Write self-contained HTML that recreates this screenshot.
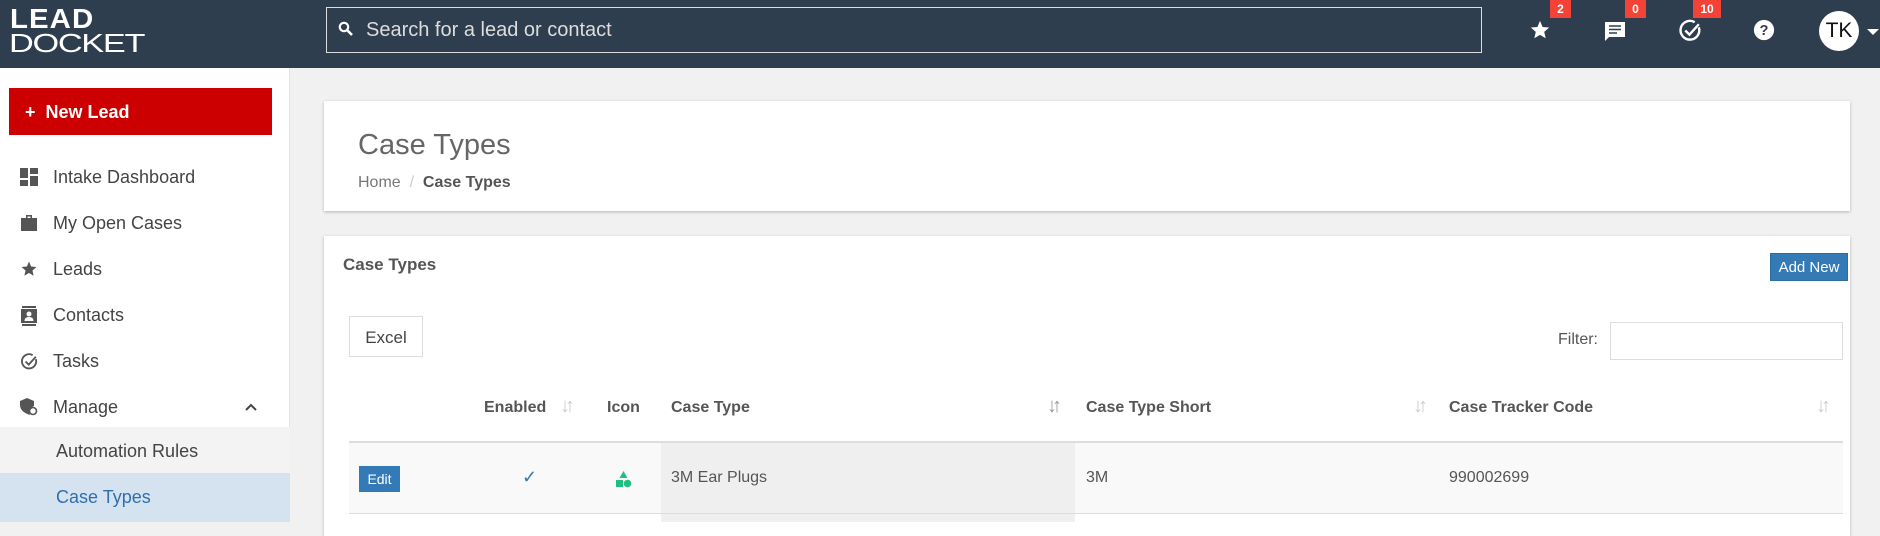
<!DOCTYPE html>
<html><head><meta charset="utf-8"><style>
*{box-sizing:border-box;margin:0;padding:0}
body{width:1880px;height:522px;overflow:hidden;background:#f1f1f1;font-family:"Liberation Sans",sans-serif;position:relative;color:#555}
.abs{position:absolute}
.hdr{left:0;top:0;width:1880px;height:68px;background:#2f3e4f}
.side{left:0;top:68px;width:290px;height:454px;background:#fff;border-right:1px solid #e2e2e2}
.nav{position:absolute;left:0;width:289px;height:46px;font-size:18px;color:#444;line-height:48px}
.nav .t{position:absolute;left:53px}
.nav svg{position:absolute;left:20px;top:15px}
.badge{background:#f44336;color:#fff;font-size:12px;font-weight:bold;height:18px;line-height:18px;text-align:center;top:0}
.card{background:#fff;box-shadow:0 1px 3px rgba(0,0,0,.25)}
.hd{position:absolute;top:399px;font-size:16px;font-weight:bold;color:#555}
.sort{position:absolute;top:395px;font-size:20px;color:#ccc;letter-spacing:-5px}
</style></head><body>
<div class="abs hdr"></div>
<div class="abs" style="left:10px;top:6px;color:#fff;font-weight:900;font-size:28px;letter-spacing:1px;line-height:26px;transform:scaleX(1.05);transform-origin:left">LEAD</div>
<div class="abs" style="left:9px;top:31px;color:#fff;font-weight:300;font-size:26px;line-height:24px;transform:scaleX(1.32);transform-origin:left;letter-spacing:-1px">DOCKET</div>
<div class="abs" style="left:326px;top:7px;width:1156px;height:46px;border:1.5px solid #ddd"></div>
<svg class="abs" style="left:338px;top:21px" width="16" height="16" viewBox="0 0 16 16"><circle cx="6" cy="6" r="4.2" fill="none" stroke="#fff" stroke-width="2.2"/><path d="M9 9l5 5" stroke="#fff" stroke-width="2.6"/></svg>
<div class="abs" style="left:366px;top:19px;color:#ddd;font-size:20px">Search for a lead or contact</div>
<svg class="abs" style="left:1529px;top:19px" width="22" height="22" viewBox="0 0 24 24"><path fill="#fff" d="M12 17.3l6.2 3.7-1.6-7 5.4-4.7-7.2-.6L12 2 9.2 8.7 2 9.3l5.4 4.7-1.6 7z"/></svg>
<div class="abs badge" style="left:1550px;width:21px">2</div>
<svg class="abs" style="left:1603px;top:19px" width="24" height="24" viewBox="0 0 24 24"><path fill="#fff" d="M2 3h20v15H6l-4 4z"/><path d="M6 7h12M6 10.5h12M6 14h8" stroke="#2f3e4f" stroke-width="1.6"/></svg>
<div class="abs badge" style="left:1625px;width:21px">0</div>
<svg class="abs" style="left:1678px;top:18px" width="25" height="25" viewBox="0 0 24 24"><path d="M20 9a9 9 0 1 1-4-5" fill="none" stroke="#fff" stroke-width="2.3"/><path d="M7 12l4 4 9-10" fill="none" stroke="#fff" stroke-width="2.3"/></svg>
<div class="abs badge" style="left:1693px;width:28px">10</div>
<svg class="abs" style="left:1753px;top:19px" width="22" height="22" viewBox="0 0 24 24"><circle cx="12" cy="12" r="11" fill="#fff"/><text x="12" y="17.5" font-size="16" font-weight="bold" text-anchor="middle" fill="#2f3e4f" font-family="Liberation Sans">?</text></svg>
<div class="abs" style="left:1819px;top:11px;width:40px;height:40px;border-radius:50%;background:#fff;color:#111;font-size:21px;line-height:40px;text-align:center">TK</div>
<div class="abs" style="left:1867px;top:29px;border-left:6px solid transparent;border-right:6px solid transparent;border-top:6px solid #fff"></div>

<div class="abs side"></div>
<div class="abs" style="left:9px;top:88px;width:263px;height:47px;background:#cc0000;color:#fff;font-weight:bold;font-size:18px;line-height:49px;padding-left:16px">+&nbsp; New Lead</div>
<div class="nav" style="top:153px"><svg width="18" height="18" viewBox="0 0 18 18"><path fill="#555" d="M0 0h8v10H0zM10 0h8v6h-8zM10 8h8v10h-8zM0 12h8v6H0z"/></svg><span class="t">Intake Dashboard</span></div>
<div class="nav" style="top:199px"><svg width="18" height="18" viewBox="0 0 18 18"><path fill="#555" d="M6 1h6v3h5v13H1V4h5zM7.5 2.5v1.5h3V2.5z"/></svg><span class="t">My Open Cases</span></div>
<div class="nav" style="top:245px"><svg width="18" height="18" viewBox="0 0 24 24"><path fill="#555" d="M12 17.3l6.2 3.7-1.6-7 5.4-4.7-7.2-.6L12 2 9.2 8.7 2 9.3l5.4 4.7-1.6 7z"/></svg><span class="t">Leads</span></div>
<div class="nav" style="top:291px"><svg width="18" height="20" viewBox="0 0 18 20"><path fill="#555" d="M2 0h14v2H2zM2 18h14v2H2zM1 3h16v14H1z"/><circle cx="9" cy="8" r="2.5" fill="#fff"/><path d="M4.5 15c0-3 2-4 4.5-4s4.5 1 4.5 4z" fill="#fff"/></svg><span class="t">Contacts</span></div>
<div class="nav" style="top:337px"><svg width="19" height="19" viewBox="0 0 24 24"><path d="M20 9a9 9 0 1 1-4-5" fill="none" stroke="#555" stroke-width="2.3"/><path d="M7 12l4 4 9-10" fill="none" stroke="#555" stroke-width="2.3"/></svg><span class="t">Tasks</span></div>
<div class="nav" style="top:383px"><svg width="18" height="18" viewBox="0 0 18 18"><path fill="#555" d="M7 0l7 3v5a7 7 0 0 0-4 9C4 15 0 12 0 7V3z"/><circle cx="13" cy="13" r="3.5" fill="none" stroke="#555" stroke-width="1.6"/></svg><span class="t">Manage</span><svg style="left:245px;top:20px" width="12" height="8" viewBox="0 0 12 8"><path d="M1 7l5-5 5 5" fill="none" stroke="#444" stroke-width="2"/></svg></div>
<div class="abs" style="left:0;top:427px;width:290px;height:46px;background:#f3f3f3;font-size:18px;line-height:48px;padding-left:56px;color:#444">Automation Rules</div>
<div class="abs" style="left:0;top:473px;width:290px;height:49px;background:#d5e3f0;font-size:18px;line-height:48px;padding-left:56px;color:#2f6fae">Case Types</div>

<div class="abs card" style="left:324px;top:101px;width:1526px;height:110px"></div>
<div class="abs" style="left:358px;top:129px;font-size:29px;font-weight:300;color:#666">Case Types</div>
<div class="abs" style="left:358px;top:174px;font-size:16px;color:#777">Home &nbsp;<span style="color:#ccc">/</span>&nbsp; <b style="color:#555">Case Types</b></div>

<div class="abs card" style="left:324px;top:236px;width:1526px;height:300px"></div>
<div class="abs" style="left:343px;top:255px;font-size:17px;font-weight:bold;color:#555">Case Types</div>
<div class="abs" style="left:1770px;top:253px;width:78px;height:28px;background:#337ab7;border:1px solid #2e6da4;color:#fff;font-size:15px;line-height:28px;text-align:center">Add New</div>
<div class="abs" style="left:349px;top:316px;width:74px;height:41px;border:1px solid #ddd;font-size:17px;line-height:41px;text-align:center;color:#444">Excel</div>
<div class="abs" style="left:1558px;top:331px;font-size:16px;color:#555">Filter:</div>
<div class="abs" style="left:1610px;top:322px;width:233px;height:38px;border:1px solid #ddd;background:#fff"></div>

<div class="hd" style="left:484px">Enabled</div><div class="sort" style="left:560px">↓↑</div>
<div class="hd" style="left:607px">Icon</div>
<div class="hd" style="left:671px">Case Type</div><div class="sort" style="left:1047px;color:#999">↓↑</div>
<div class="hd" style="left:1086px">Case Type Short</div><div class="sort" style="left:1413px">↓↑</div>
<div class="hd" style="left:1449px">Case Tracker Code</div><div class="sort" style="left:1816px">↓↑</div>
<div class="abs" style="left:349px;top:441px;width:1494px;height:2px;background:#ddd"></div>
<div class="abs" style="left:349px;top:443px;width:1494px;height:70px;background:#f9f9f9"></div>
<div class="abs" style="left:661px;top:443px;width:414px;height:79px;background:#efefef"></div>
<div class="abs" style="left:349px;top:513px;width:1494px;height:1px;background:#ddd"></div>
<div class="abs" style="left:359px;top:466px;width:41px;height:26px;background:#337ab7;color:#fff;font-size:14px;line-height:26px;text-align:center">Edit</div>
<div class="abs" style="left:522px;top:467px;font-size:18px;color:#337ab7">✓</div>
<svg class="abs" style="left:615px;top:471px" width="17" height="17" viewBox="0 0 17 17"><path fill="#1fbf7f" d="M8.5 0l4 7h-8z"/><rect x="1" y="9" width="7" height="7" fill="#1fbf7f"/><circle cx="12.5" cy="12.5" r="3.8" fill="#1fbf7f"/></svg>
<div class="abs" style="left:671px;top:469px;font-size:16px;color:#555">3M Ear Plugs</div>
<div class="abs" style="left:1086px;top:469px;font-size:16px;color:#555">3M</div>
<div class="abs" style="left:1449px;top:469px;font-size:16px;color:#555">990002699</div>
</body></html>
